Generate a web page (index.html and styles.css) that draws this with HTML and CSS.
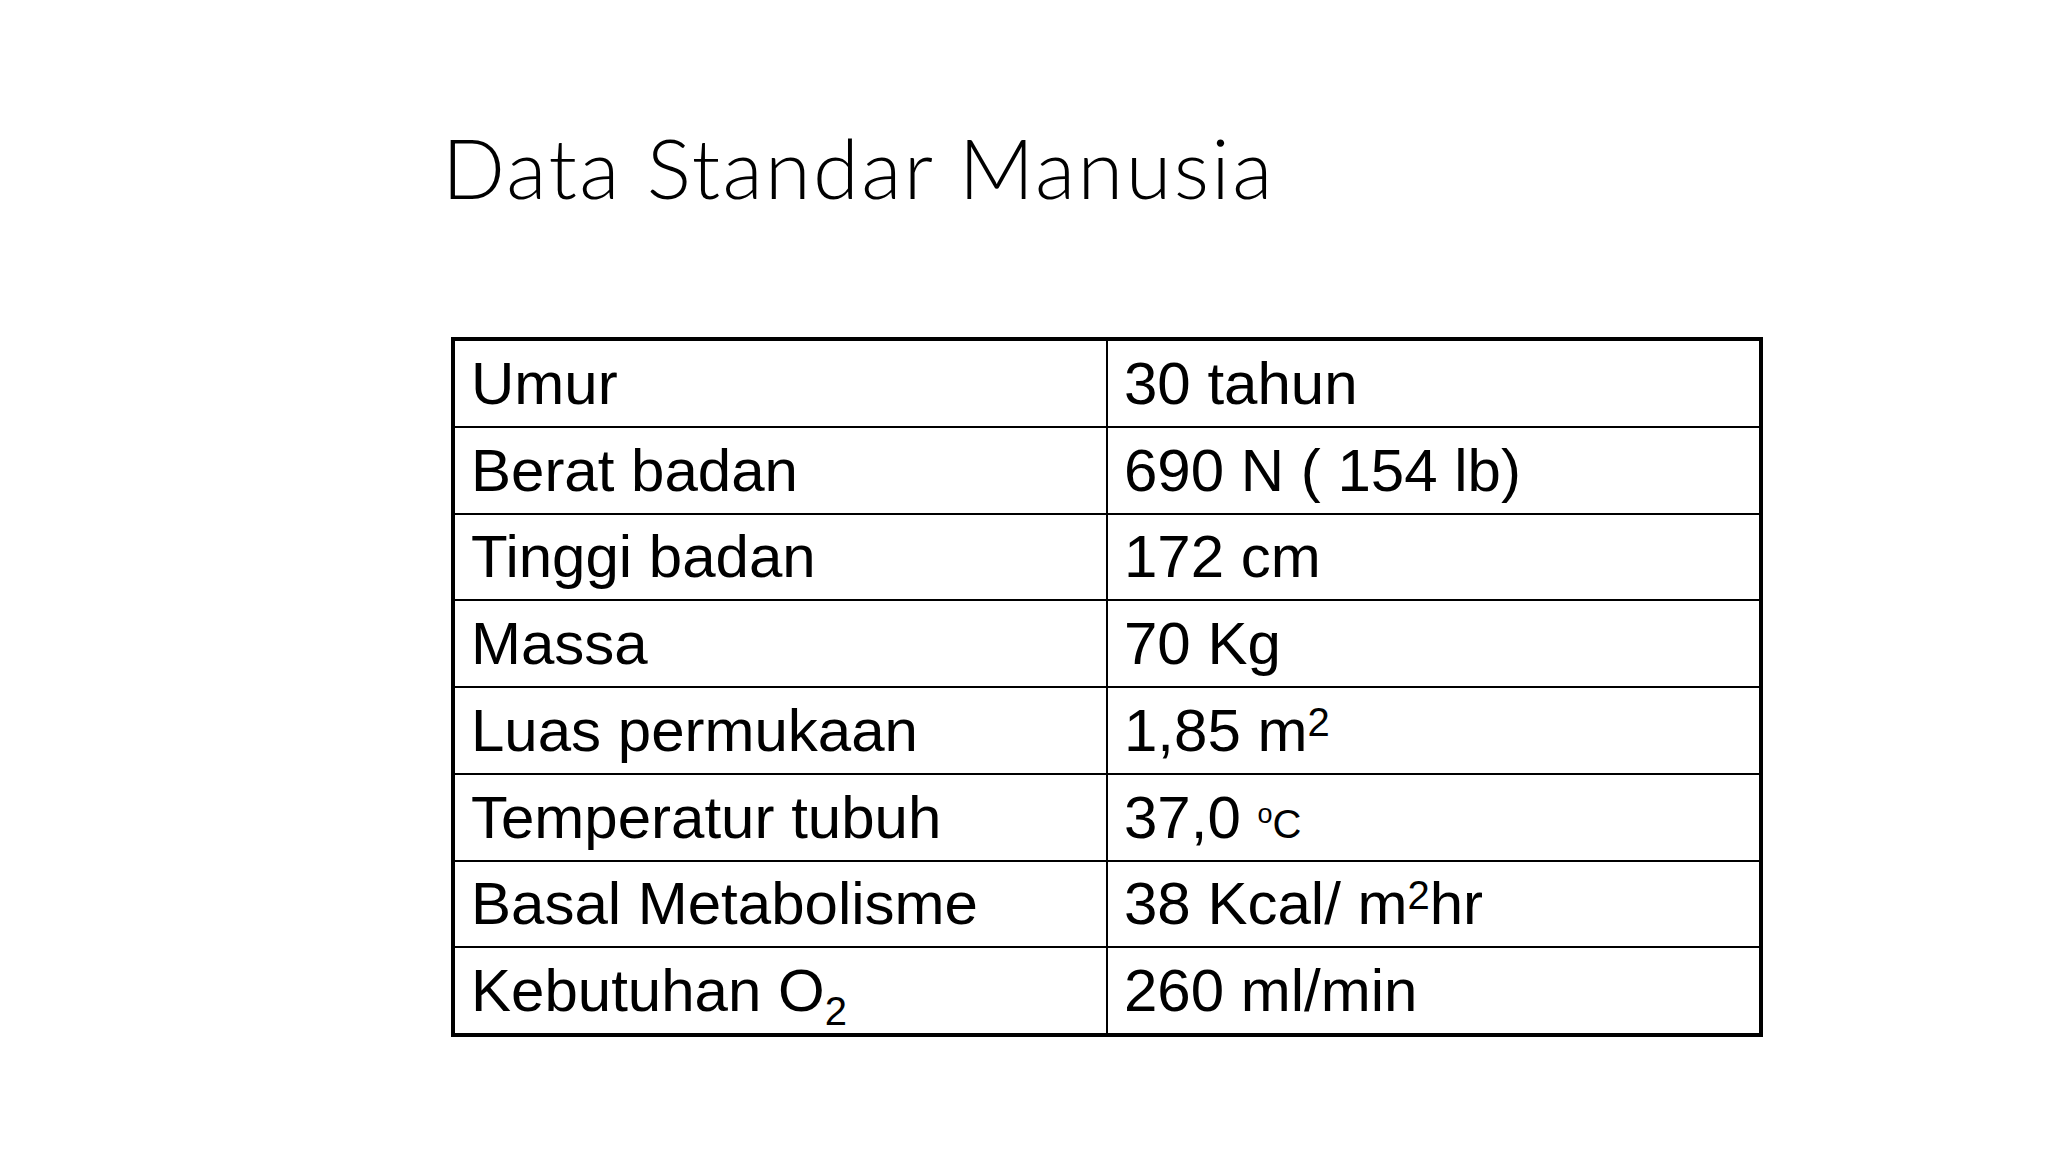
FILE: index.html
```html
<!DOCTYPE html>
<html lang="id">
<head>
<meta charset="utf-8">
<title>Data Standar Manusia</title>
<link rel="stylesheet" href="styles.css">
</head>
<body>
<main class="slide">
  <h1 class="title">Data Standar Manusia</h1>
  <table class="data">
    <tbody>
      <tr><td>Umur</td><td>30 tahun</td></tr>
      <tr><td>Berat badan</td><td>690 N ( 154 lb)</td></tr>
      <tr><td>Tinggi badan</td><td>172 cm</td></tr>
      <tr><td>Massa</td><td>70 Kg</td></tr>
      <tr><td>Luas permukaan</td><td>1,85 m<sup class="sup">2</sup></td></tr>
      <tr><td>Temperatur tubuh</td><td>37,0 <span class="unit"><sup class="deg">o</sup>C</span></td></tr>
      <tr><td>Basal Metabolisme</td><td>38 Kcal/ m<sup class="sup">2</sup>hr</td></tr>
      <tr><td>Kebutuhan O<sub class="sub">2</sub></td><td>260 ml/min</td></tr>
    </tbody>
  </table>
</main>
</body>
</html>
```
FILE: styles.css
```css
html, body {
  margin: 0;
  padding: 0;
  background: #ffffff;
}

.slide {
  width: 2048px;
  height: 1152px;
  box-sizing: border-box;
  padding: 117px 0 0 451px;
  color: #000;
}

.title {
  margin: 0 0 0 -9px;
  font-family: "Lato", "Open Sans", sans-serif;
  font-weight: 300;
  font-size: 83px;
  letter-spacing: 2.4px;
  line-height: 100px;
  color: #000;
}

.data {
  margin-top: 120px;
  border: 4px solid #000;
  border-collapse: separate;
  border-spacing: 0;
  font-family: "Liberation Sans", Arial, sans-serif;
  font-size: 60px;
  color: #000;
}

.data td {
  width: 621px;
  height: 84.75px;
  padding: 0 14px 0 16px;
  vertical-align: middle;
  white-space: nowrap;
  border-bottom: 2px solid #000;
  line-height: normal;
}

.data td:first-child {
  border-right: 2px solid #000;
}

.data tr:last-child td {
  border-bottom: 0;
}

.sup {
  font-size: 40px;
  vertical-align: 15px;
  line-height: 0;
}

.sub {
  font-size: 40px;
  vertical-align: -14px;
  line-height: 0;
}

.unit {
  font-size: 40px;
}

.deg {
  font-size: 27px;
  vertical-align: 15px;
  line-height: 0;
}
```
